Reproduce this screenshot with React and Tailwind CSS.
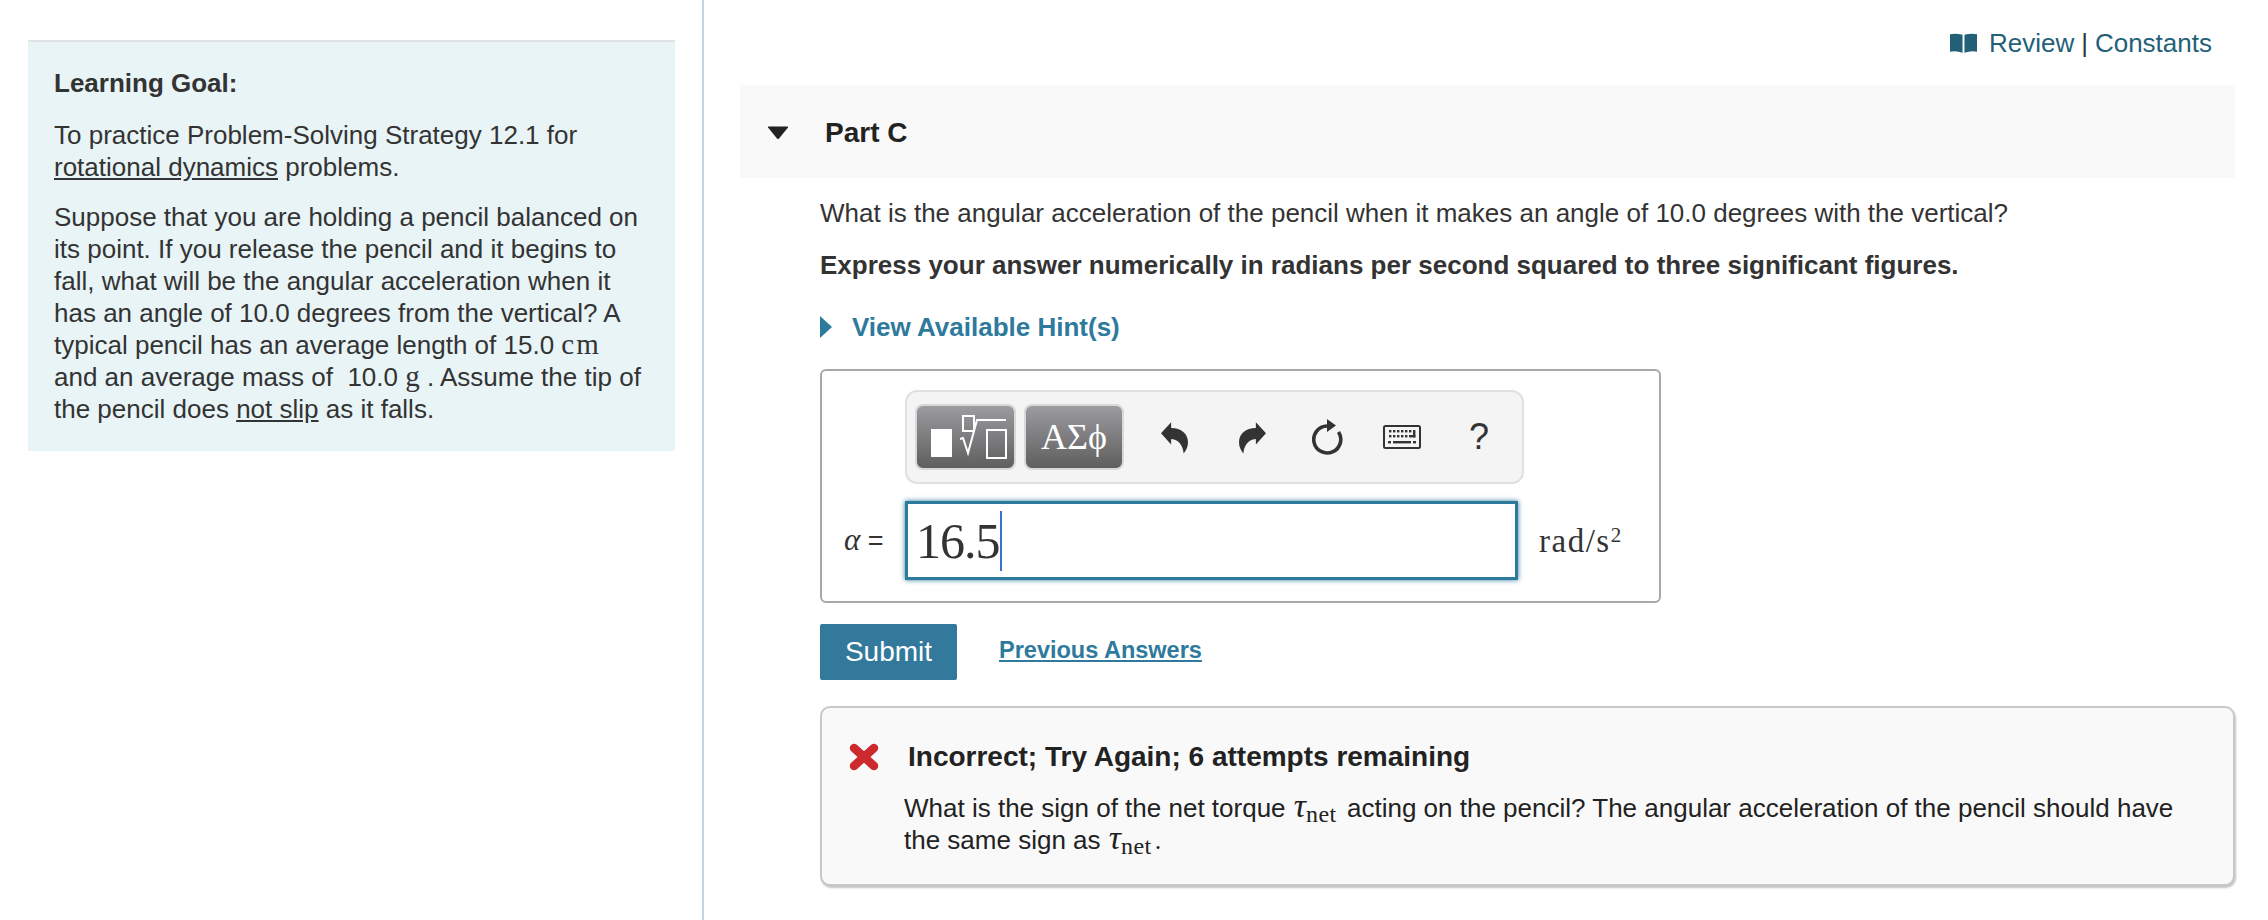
import React from 'react';

const serif = "font-['Liberation_Serif',serif]";

function Caret({ className }) {
  return (
    <svg viewBox="0 0 22 14" className={className} fill="currentColor">
      <path d="M1 1.5 Q0.5 0.5 2 0.5 H20 Q21.5 0.5 21 1.5 L12 12.5 Q11 13.5 10 12.5 Z" />
    </svg>
  );
}

function BookIcon() {
  return (
    <svg viewBox="0 0 28 20" className="w-[27px] h-[20px]" fill="#245f78">
      <path d="M0 1 Q6 -0.5 13 1.5 V20 Q6 17.5 0 19 Z" />
      <path d="M28 1 Q22 -0.5 15 1.5 V20 Q22 17.5 28 19 Z" />
    </svg>
  );
}

function ArrowIcon({ flip }) {
  return (
    <svg viewBox="0 0 80 95" className={`w-[27px] h-[33px] ${flip ? '-scale-x-100' : ''}`} fill="#333">
      <path d="M0 35 L30 2 V19 C60 19 80 36 80 62 C80 75 74 86 67 95 C66 75 55 54 30 52 V68 Z" />
    </svg>
  );
}

function RedoIcon() {
  return (
    <svg viewBox="0 0 32 37" className="w-[32px] h-[37px]">
      <path d="M27.5 13 A13.5 13.5 0 1 1 16 7" fill="none" stroke="#333" strokeWidth="3.6" />
      <path d="M16 0 L25 6.5 L16 13 Z" fill="#333" />
    </svg>
  );
}

function KeyboardIcon() {
  const top = [6, 10, 14, 18, 22, 26];
  const mid = [6, 10, 14, 18, 22];
  return (
    <svg viewBox="0 0 38 24" className="w-[38px] h-[24px]" fill="#333">
      <rect x="1" y="1" width="36" height="22" rx="1.5" fill="none" stroke="#333" strokeWidth="2" />
      {top.map(x => <rect key={x} x={x} y="5" width="2.4" height="2.4" />)}
      {mid.map(x => <rect key={x} x={x} y="10" width="2.4" height="2.4" />)}
      <rect x="30" y="5" width="2.4" height="7.4" />
      <rect x="26" y="10" width="6.4" height="2.4" />
      <rect x="5" y="16" width="3" height="2.4" />
      <rect x="10" y="16" width="18" height="2.4" />
      <rect x="30" y="16" width="3" height="2.4" />
    </svg>
  );
}

function CrossIcon() {
  return (
    <svg viewBox="0 0 30 28" className="w-[30px] h-[28px]" fill="none" stroke="#cd2a2f" strokeWidth="8.5" strokeLinecap="round">
      <path d="M5 5 L25 23" />
      <path d="M25 5 L5 23" />
    </svg>
  );
}

function TauNet() {
  return (
    <span className={`${serif} ml-[1px] mr-[3px] whitespace-nowrap leading-[0]`}>
      <i className="text-[34px] leading-[0]">τ</i>
      <span className="relative top-[5px] text-[24px] tracking-[0.5px] leading-[0]">net</span>
    </span>
  );
}

export default function App() {
  return (
    <div className="flex h-[920px] w-[2268px] overflow-hidden bg-white font-['Liberation_Sans',sans-serif] text-[26px] leading-[32px] text-[#333]">
      <div className="w-[704px] shrink-0 border-r-2 border-[#c5d3e0] pt-10 pl-[28px] pr-[27px]">
        <div className="h-[411px] border-t-2 border-[#dfe3e4] bg-[#e8f4f6] pl-[26px] pr-[27px] pt-[25px]">
          <p className="font-bold">Learning Goal:</p>
          <p className="mt-[20px]">
            To practice Problem-Solving Strategy 12.1 for <span className="underline">rotational dynamics</span> problems.
          </p>
          <p className="mt-[18px]">
            Suppose that you are holding a pencil balanced on its point. If you release the pencil and it begins to fall, what will be the angular acceleration when it has an angle of 10.0 degrees from the vertical? A typical pencil has an average length of 15.0 <span className={`${serif} text-[29px] tracking-[2px] leading-[0]`}>cm</span> and an average mass of &nbsp;10.0 <span className={`${serif} text-[29px] leading-[0]`}>g</span> . Assume the tip of the pencil does <span className="underline">not slip</span> as it falls.
          </p>
        </div>
      </div>

      <div className="flex-1 pl-9 pr-[33px]">
        <div className="flex h-[85px] items-center justify-end pr-[23px]">
          <BookIcon />
          <span className="ml-3 text-[#245f78]">Review</span>
          <span className="mx-[7px]">|</span>
          <span className="text-[#245f78]">Constants</span>
        </div>

        <div className="flex h-[93px] items-center bg-[#f9f9f9] pl-[27px] pt-[2px]">
          <Caret className="w-[22px] h-[14px] text-[#222]" />
          <span className="ml-[36px] text-[28px] font-bold text-[#222]">Part C</span>
        </div>

        <div className="pl-20">
          <p className="mt-[19px]">What is the angular acceleration of the pencil when it makes an angle of 10.0 degrees with the vertical?</p>
          <p className="mt-[20px] font-bold">Express your answer numerically in radians per second squared to three significant figures.</p>
          <div className="mt-[30px] flex items-center font-bold text-[#2e7a9c]">
            <svg viewBox="0 0 12 24" className="w-[12px] h-[24px]" fill="currentColor">
              <path d="M0 1 L12 12 L0 23 Z" />
            </svg>
            <span className="ml-[20px]">View Available Hint(s)</span>
          </div>

          <div className="mt-[26px] h-[234px] w-[841px] rounded-[6px] border-2 border-[#a8a8a8] pl-[83px] pt-[19px]">
            <div className="flex h-[94px] w-[619px] items-center rounded-[12px] border-2 border-[#e0e0e0] bg-[#f4f4f4] pl-[8px]">
              <div className="flex h-[66px] w-[101px] items-center gap-[3px] rounded-[8px] border-2 border-[#d8d8d8] bg-gradient-to-b from-[#9c9ca1] to-[#5f5f5f] pl-[14px]">
                <span className="mt-[12px] h-[28px] w-[21px] shrink-0 bg-white" />
                <svg viewBox="0 0 53 46" className="w-[53px] h-[46px] shrink-0" fill="none" stroke="white" strokeWidth="2">
                  <rect x="8" y="2" width="11" height="15" />
                  <path d="M5 25 L8 24 L13 39 L22 6 H51" />
                  <rect x="32" y="16" width="19" height="28" />
                </svg>
              </div>
              <div className={`ml-[8px] flex h-[66px] w-[100px] items-center justify-center rounded-[8px] border-2 border-[#d8d8d8] bg-gradient-to-b from-[#9c9ca1] to-[#5f5f5f] text-[36px] text-white ${serif}`}>
                ΑΣϕ
              </div>
              <div className="ml-[30px] w-[40px] flex justify-center"><ArrowIcon /></div>
              <div className="ml-[38px] w-[40px] flex justify-center"><ArrowIcon flip /></div>
              <div className="ml-[35px] w-[40px] flex justify-center"><RedoIcon /></div>
              <div className="ml-[35px] w-[40px] flex justify-center"><KeyboardIcon /></div>
              <div className="ml-[37px] w-[40px] flex justify-center text-[36px] text-[#333]">?</div>
            </div>

            <div className="relative mt-[17px] h-[79px] w-[613px] border-[3px] border-[#2e7a9c] bg-white pl-[8px] shadow-[0_0_5px_#2e7a9c]">
              <div className="absolute left-[-64px] top-[20px] whitespace-nowrap text-[27px]">
                <i className={`${serif} text-[31px]`}>α</i> =
              </div>
              <div className={`flex h-full items-center text-[50px] tracking-[-1px] leading-none ${serif}`}>
                16.5<span className="h-[60px] w-[2px] bg-[#3b6fd4]" />
              </div>
              <div className={`absolute left-[631px] top-[21px] whitespace-nowrap text-[33px] tracking-[1.5px] ${serif}`}>
                rad/s<sup className="text-[21px]">2</sup>
              </div>
            </div>
          </div>

          <div className="mt-[21px] flex items-start">
            <div className="flex h-[56px] w-[137px] items-center justify-center rounded-[2px] bg-[#32799b] text-[28px] text-white">Submit</div>
            <span className="ml-[42px] mt-[10px] text-[23.5px] font-bold text-[#2e7a9c] underline">Previous Answers</span>
          </div>

          <div className="mt-[26px] h-[180px] w-[1415px] rounded-[10px] border-2 border-[#c8c8c8] bg-[#f9f9f9] pl-[27px] pt-[33px] shadow-[1px_2px_2px_#c4c4c4]">
            <div className="flex items-center">
              <CrossIcon />
              <span className="ml-[29px] text-[28px] font-bold text-[#222]">Incorrect; Try Again; 6 attempts remaining</span>
            </div>
            <p className="ml-[55px] mt-[19px] pr-[50px] text-[#222]">
              What is the sign of the net torque <TauNet /> acting on the pencil? The angular acceleration of the pencil should have the same sign as <TauNet /><span className={serif}>.</span>
            </p>
          </div>
        </div>
      </div>
    </div>
  );
}
